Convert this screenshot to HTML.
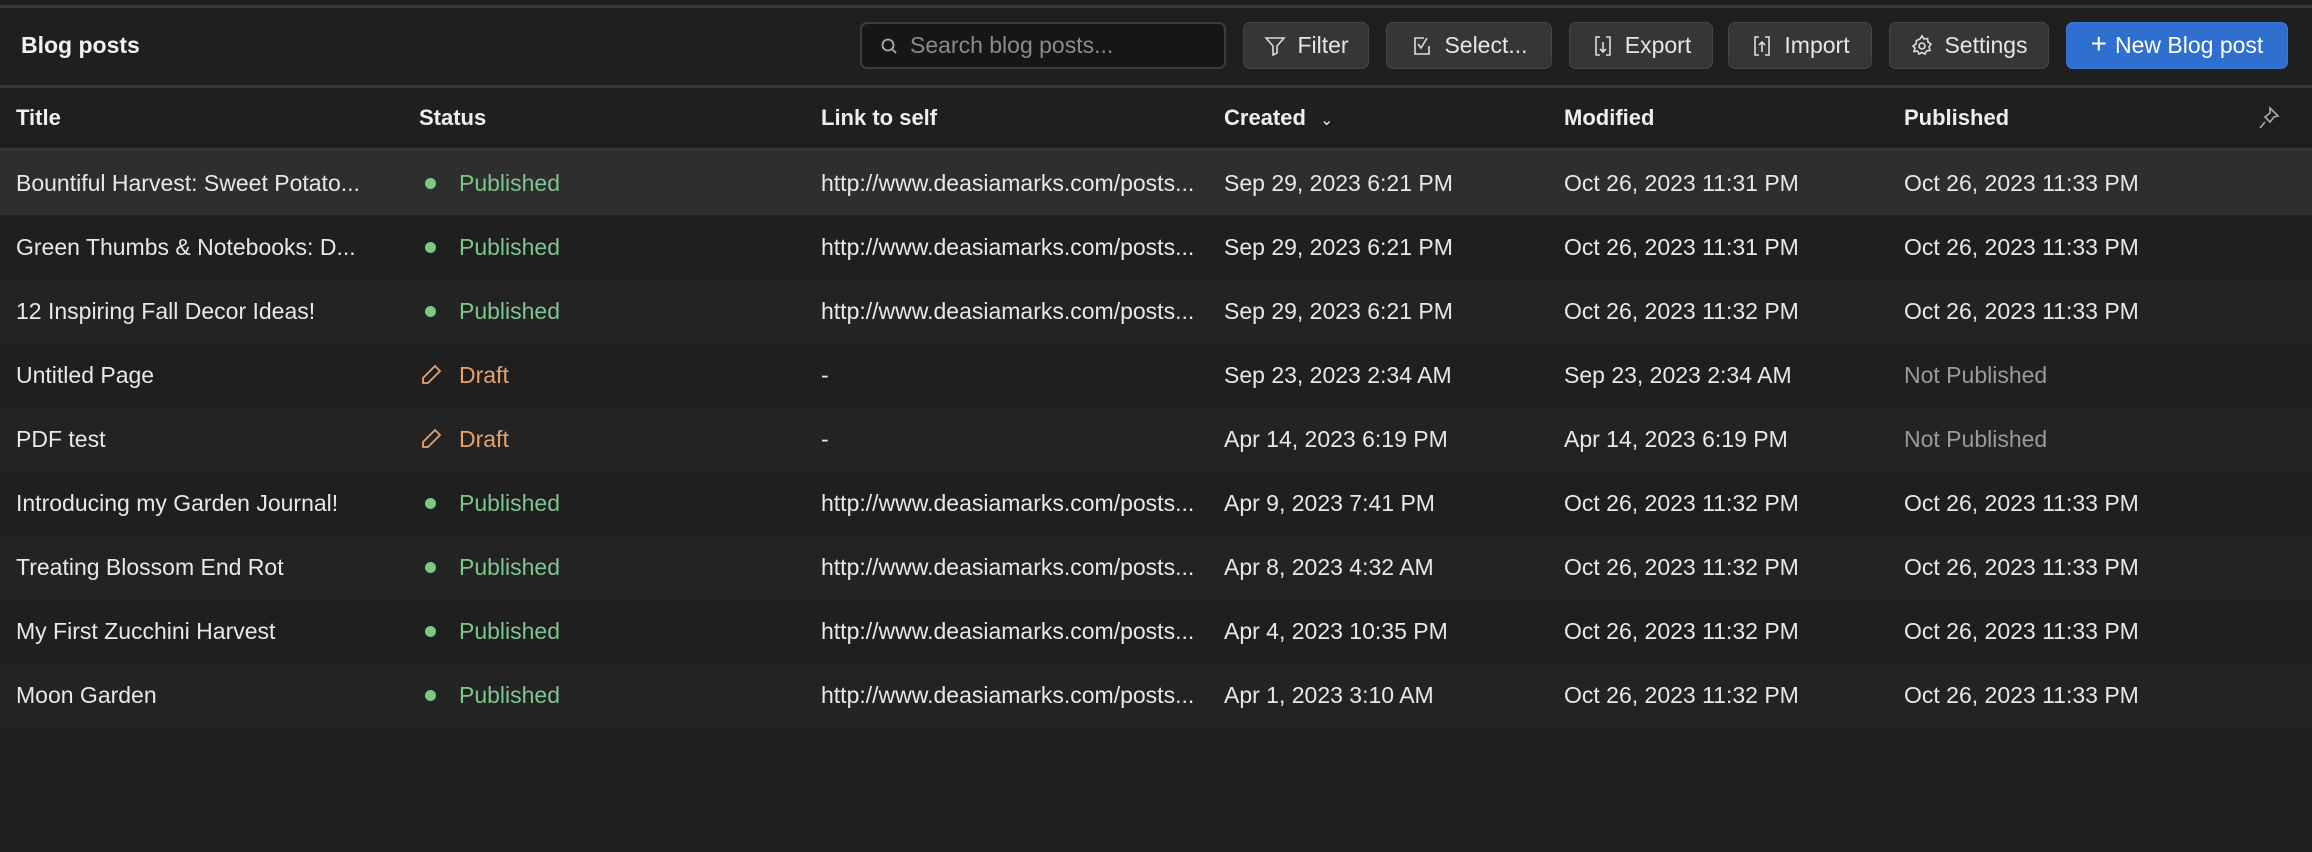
<!DOCTYPE html>
<html><head><meta charset="utf-8"><style>
*{box-sizing:border-box;margin:0;padding:0}
body{width:2312px;height:852px;background:#1f1f1f;font-family:"Liberation Sans",sans-serif;color:#e8e8e8;position:relative;overflow:hidden}
.topline{position:absolute;left:0;top:5px;width:2312px;height:3px;background:#3a3a3a}
.title{position:absolute;left:21px;top:32px;font-size:23px;font-weight:bold;color:#f2f2f2}
.sep{position:absolute;left:0;width:2312px;height:3px;background:#353535}
.btn{position:absolute;top:22px;height:47px;background:#363636;border:1px solid #444;border-radius:7px;font-size:23px;color:#e6e6e6;display:flex;align-items:center;justify-content:center;gap:10px}
.btn svg{width:24px;height:24px;stroke:#ddd;fill:none;stroke-width:1.6}
.search{position:absolute;left:860px;top:22px;width:366px;height:47px;background:#161616;border:2px solid #3c3c3c;border-radius:7px;font-size:23px;color:#8a8a8a;display:flex;align-items:center;padding-left:18px;gap:12px}
.hdr{position:absolute;top:105px;font-size:22px;font-weight:bold;color:#eee}
.row{position:absolute;left:0;width:2312px;height:64px;font-size:23px}
.row span{position:absolute;top:19px;white-space:nowrap}
.g{color:#7cc88a}.o{color:#e6a26a}.m{color:#9a9a9a}
.dot{width:11px;height:11px;border-radius:50%;background:#7cc88a;top:27px!important}
</style></head><body>
<div class="topline"></div>
<div class="title">Blog posts</div>
<div class="search"><svg width="18" height="18" viewBox="0 0 18 18" fill="none" stroke="#aaa" stroke-width="1.8"><circle cx="8" cy="8" r="5.5"/><path d="M12 12l4 4"/></svg>Search blog posts...</div>
<div class="btn" style="left:1243px;width:126px"><svg viewBox="0 0 24 24"><path d="M3 4h18l-7 8v7l-4 2v-9z"/></svg>Filter</div>
<div class="btn" style="left:1386px;width:166px"><svg viewBox="0 0 24 24"><path d="M14 4H5v16h14v-8"/><path d="M8 10l3 4 6-10"/></svg>Select...</div>
<div class="btn" style="left:1569px;width:144px"><svg viewBox="0 0 24 24"><path d="M9 3H5v18h4M15 3h4v18h-4"/><path d="M12 8v10M9 15l3 3 3-3"/></svg>Export</div>
<div class="btn" style="left:1728px;width:144px"><svg viewBox="0 0 24 24"><path d="M9 3H5v18h4M15 3h4v18h-4"/><path d="M12 18V8M9 11l3-3 3 3"/></svg>Import</div>
<div class="btn" style="left:1889px;width:160px"><svg viewBox="0 0 24 24"><circle cx="12" cy="12" r="3"/><path d="M12 2l2 3 3.5-.5.5 3.5 3 2-2 3 1 3.5-3.5.5-1.5 3-3-1.5-3 1.5-1.5-3L4 17.5 5 14l-2-2 3-2 .5-3.5L10 5z"/></svg>Settings</div>
<div class="btn" style="left:2066px;width:222px;background:#2f6fd0;border-color:#3a78d8;color:#fff;gap:8px"><span style="font-size:28px;font-weight:300;margin-top:-3px">+</span>New Blog post</div>
<div class="sep" style="top:85px"></div>
<div class="hdr" style="left:16px">Title</div>
<div class="hdr" style="left:419px">Status</div>
<div class="hdr" style="left:821px">Link to self</div>
<div class="hdr" style="left:1224px">Created <span style="font-weight:normal;font-size:16px;margin-left:8px">&#8964;</span></div>
<div class="hdr" style="left:1564px">Modified</div>
<div class="hdr" style="left:1904px">Published</div>
<svg style="position:absolute;left:2258px;top:106px" width="22" height="24" viewBox="0 0 22 24" fill="none" stroke="#aaa" stroke-width="1.6"><path d="M12 2l8 8-4 1-4 5-5-5 5-4z"/><path d="M7 16l-5 6"/></svg>
<div class="sep" style="top:148px"></div>

<div class="row" style="top:151px;background:#2e2e2e"><span style="left:16px">Bountiful Harvest: Sweet Potato...</span><span class="dot" style="left:425px"></span><span class="g" style="left:459px">Published</span><span style="left:821px">http://www.deasiamarks.com/posts...</span><span style="left:1224px">Sep 29, 2023 6:21 PM</span><span style="left:1564px">Oct 26, 2023 11:31 PM</span><span style="left:1904px">Oct 26, 2023 11:33 PM</span></div>
<div class="row" style="top:215px;background:#1f1f1f"><span style="left:16px">Green Thumbs &amp; Notebooks: D...</span><span class="dot" style="left:425px"></span><span class="g" style="left:459px">Published</span><span style="left:821px">http://www.deasiamarks.com/posts...</span><span style="left:1224px">Sep 29, 2023 6:21 PM</span><span style="left:1564px">Oct 26, 2023 11:31 PM</span><span style="left:1904px">Oct 26, 2023 11:33 PM</span></div>
<div class="row" style="top:279px;background:#232323"><span style="left:16px">12 Inspiring Fall Decor Ideas!</span><span class="dot" style="left:425px"></span><span class="g" style="left:459px">Published</span><span style="left:821px">http://www.deasiamarks.com/posts...</span><span style="left:1224px">Sep 29, 2023 6:21 PM</span><span style="left:1564px">Oct 26, 2023 11:32 PM</span><span style="left:1904px">Oct 26, 2023 11:33 PM</span></div>
<div class="row" style="top:343px;background:#1f1f1f"><span style="left:16px">Untitled Page</span><svg style="position:absolute;left:419px;top:20px" width="24" height="24" viewBox="0 0 24 24" fill="none" stroke="#e6a26a" stroke-width="1.8"><path d="M16 3l5 5L9 20H4v-5z"/></svg><span class="o" style="left:459px">Draft</span><span style="left:821px">-</span><span style="left:1224px">Sep 23, 2023 2:34 AM</span><span style="left:1564px">Sep 23, 2023 2:34 AM</span><span class="m" style="left:1904px">Not Published</span></div>
<div class="row" style="top:407px;background:#232323"><span style="left:16px">PDF test</span><svg style="position:absolute;left:419px;top:20px" width="24" height="24" viewBox="0 0 24 24" fill="none" stroke="#e6a26a" stroke-width="1.8"><path d="M16 3l5 5L9 20H4v-5z"/></svg><span class="o" style="left:459px">Draft</span><span style="left:821px">-</span><span style="left:1224px">Apr 14, 2023 6:19 PM</span><span style="left:1564px">Apr 14, 2023 6:19 PM</span><span class="m" style="left:1904px">Not Published</span></div>
<div class="row" style="top:471px;background:#1f1f1f"><span style="left:16px">Introducing my Garden Journal!</span><span class="dot" style="left:425px"></span><span class="g" style="left:459px">Published</span><span style="left:821px">http://www.deasiamarks.com/posts...</span><span style="left:1224px">Apr 9, 2023 7:41 PM</span><span style="left:1564px">Oct 26, 2023 11:32 PM</span><span style="left:1904px">Oct 26, 2023 11:33 PM</span></div>
<div class="row" style="top:535px;background:#232323"><span style="left:16px">Treating Blossom End Rot</span><span class="dot" style="left:425px"></span><span class="g" style="left:459px">Published</span><span style="left:821px">http://www.deasiamarks.com/posts...</span><span style="left:1224px">Apr 8, 2023 4:32 AM</span><span style="left:1564px">Oct 26, 2023 11:32 PM</span><span style="left:1904px">Oct 26, 2023 11:33 PM</span></div>
<div class="row" style="top:599px;background:#1f1f1f"><span style="left:16px">My First Zucchini Harvest</span><span class="dot" style="left:425px"></span><span class="g" style="left:459px">Published</span><span style="left:821px">http://www.deasiamarks.com/posts...</span><span style="left:1224px">Apr 4, 2023 10:35 PM</span><span style="left:1564px">Oct 26, 2023 11:32 PM</span><span style="left:1904px">Oct 26, 2023 11:33 PM</span></div>
<div class="row" style="top:663px;background:#232323"><span style="left:16px">Moon Garden</span><span class="dot" style="left:425px"></span><span class="g" style="left:459px">Published</span><span style="left:821px">http://www.deasiamarks.com/posts...</span><span style="left:1224px">Apr 1, 2023 3:10 AM</span><span style="left:1564px">Oct 26, 2023 11:32 PM</span><span style="left:1904px">Oct 26, 2023 11:33 PM</span></div>
</body></html>
